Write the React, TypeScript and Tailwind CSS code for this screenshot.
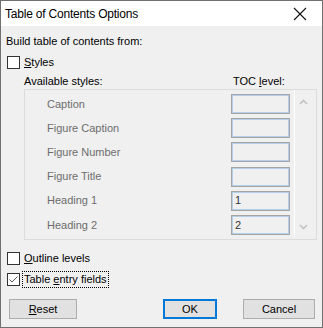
import React from "react"

const levels = [
  { name: "Caption", value: "" },
  { name: "Figure Caption", value: "" },
  { name: "Figure Number", value: "" },
  { name: "Figure Title", value: "" },
  { name: "Heading 1", value: "1" },
  { name: "Heading 2", value: "2" },
]

const CheckBox = ({ checked }: { checked?: boolean }) => (
  <span className="w-[13px] h-[13px] border border-[#333333] bg-white flex items-center justify-center shrink-0">
    {checked && (
      <svg width="11" height="11" viewBox="0 0 11 11">
        <path d="M1.5 5.5 L4 8 L9.5 2.5" fill="none" stroke="#555" strokeWidth="1" />
      </svg>
    )}
  </span>
)

const Chevron = ({ up }: { up?: boolean }) => (
  <svg width="9" height="6" viewBox="0 0 9 6">
    <path
      d={up ? "M1 5 L4.5 1.5 L8 5" : "M1 1 L4.5 4.5 L8 1"}
      fill="none"
      stroke="#c2c2c2"
      strokeWidth="1.6"
    />
  </svg>
)

export default function App() {
  return (
    <div
      className="w-[323px] h-[328px] border border-[#707070] bg-[#f0f0f0] flex flex-col text-[11px] text-black overflow-hidden"
      style={{ fontFamily: '"Liberation Sans", Arial, sans-serif' }}
    >
      <div className="h-[25px] bg-white flex items-center justify-between pl-[4px] pr-[15px] shrink-0">
        <span className="text-[12px] tracking-[-0.2px]">Table of Contents Options</span>
        <svg width="14" height="14" viewBox="0 0 14 14">
          <path d="M1 1 L13 13 M13 1 L1 13" stroke="#111" strokeWidth="1.1" />
        </svg>
      </div>

      <div className="flex flex-col">
        <div className="h-4 mt-[7px] pl-[5px] flex items-center">Build table of contents from:</div>

        <div className="h-4 mt-[5px] pl-[6px] flex items-center gap-[4px]">
          <CheckBox />
          <span>
            <span className="underline">S</span>tyles
          </span>
        </div>

        <div className="h-4 mt-[3px] flex items-center">
          <span className="pl-[23px] w-[232px]">Available styles:</span>
          <span>
            TOC <span className="underline">l</span>evel:
          </span>
        </div>

        <div className="ml-[23px] w-[293px] h-[151px] border border-[#dcdcdc] flex pr-[5px]">
          <div className="flex-1 flex flex-col pt-[4px] pl-[22px] pr-[4px]">
            {levels.map((l) => (
              <div key={l.name} className="h-[24.5px] flex items-start">
                <div className="h-5 flex-1 flex items-center text-[#6d6d6d]">{l.name}</div>
                <div className="w-[59px] h-5 border border-[#a5a5a5] shrink-0">
                  <div className="w-full h-full border border-[#b5cfea] flex items-center pl-[2px] text-[#333]">
                    {l.value}
                  </div>
                </div>
              </div>
            ))}
          </div>
          <div className="w-[17px] mb-[3px] border-l border-white flex flex-col items-center justify-between pt-[9px] pb-[6px]">
            <Chevron up />
            <Chevron />
          </div>
        </div>

        <div className="h-4 mt-[10px] pl-[6px] flex items-center gap-[2px]">
          <CheckBox />
          <span className="px-[2px]">
            <span className="underline">O</span>utline levels
          </span>
        </div>

        <div className="h-[17px] mt-[5px] pl-[6px] flex items-center gap-[2px]">
          <CheckBox checked />
          <span className="h-[17px] px-[1px] border border-dotted border-black flex items-center">
            <span>
              Table <span className="underline">e</span>ntry fields
            </span>
          </span>
        </div>

        <div className="mt-[11px] flex items-start">
          <button className="ml-[8px] w-[68px] h-[20px] border border-[#adadad] bg-[#e1e1e1] text-[11px]">
            <span className="underline">R</span>eset
          </button>
          <button className="ml-[86px] w-[54px] h-[20px] border-2 border-[#0078d7] bg-[#e1e1e1] text-[11px]">
            OK
          </button>
          <button className="ml-[26px] w-[72px] h-[20px] border border-[#adadad] bg-[#e1e1e1] text-[11px]">
            Cancel
          </button>
        </div>
      </div>
    </div>
  )
}
